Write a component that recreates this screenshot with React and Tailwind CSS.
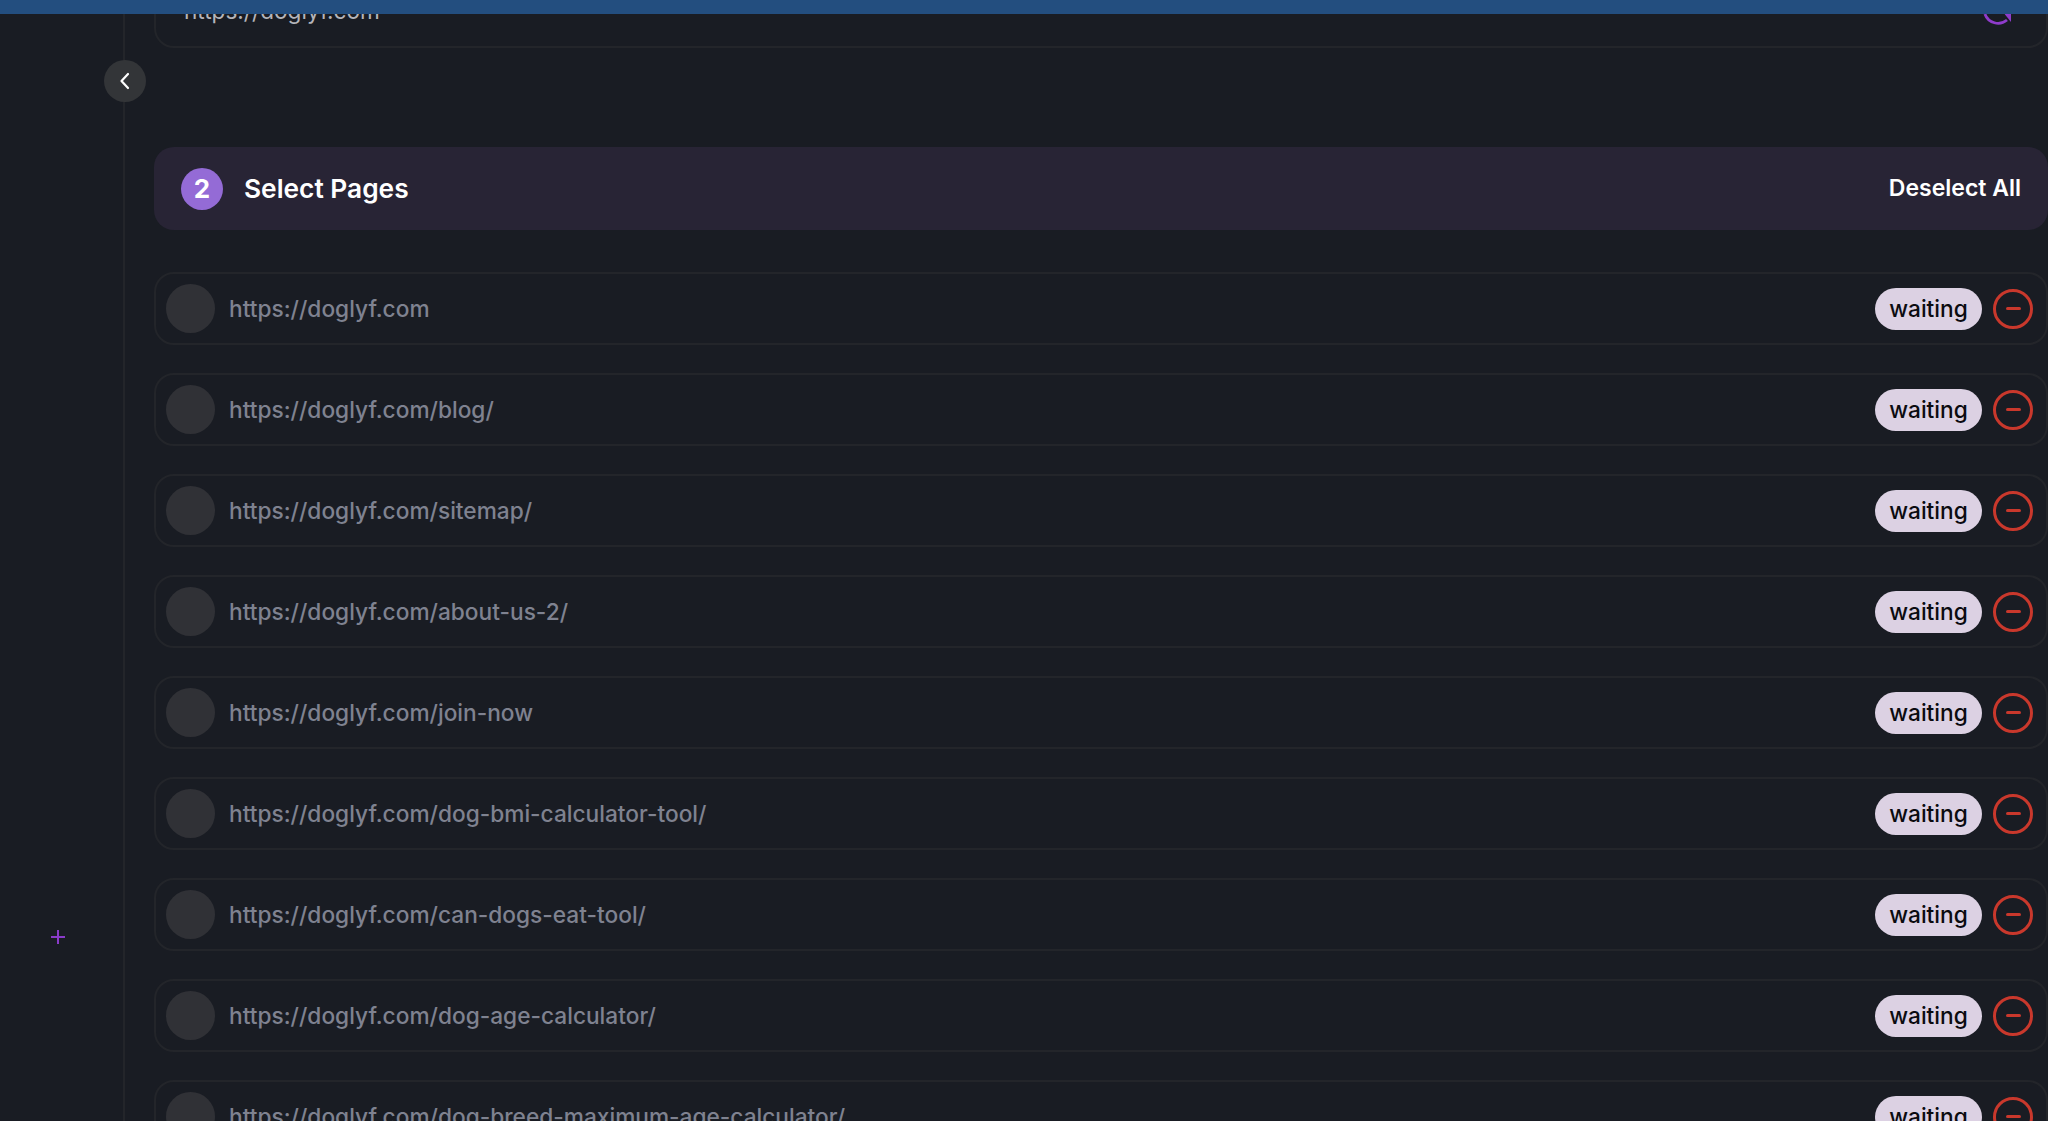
const urls = [
  "https://doglyf.com",
  "https://doglyf.com/blog/",
  "https://doglyf.com/sitemap/",
  "https://doglyf.com/about-us-2/",
  "https://doglyf.com/join-now",
  "https://doglyf.com/dog-bmi-calculator-tool/",
  "https://doglyf.com/can-dogs-eat-tool/",
  "https://doglyf.com/dog-age-calculator/",
  "https://doglyf.com/dog-breed-maximum-age-calculator/",
];

function Row({ url }) {
  return (
    <div className="h-[73px] shrink-0 flex items-center rounded-[20px] border-2 border-[#23252a] pl-[10px] pr-[13px]">
      <div className="w-[49px] h-[49px] rounded-full bg-[#303136] shrink-0" />
      <span className="ml-[14px] text-[22.7px] leading-[30px] font-[450] text-[#7f8290]">{url}</span>
      <span className="ml-auto w-[107px] h-[42px] rounded-full bg-[#dcd1e3] text-[#0b0b10] text-[22.7px] font-[450] pt-[1px] flex items-center justify-center">waiting</span>
      <span className="ml-[11px] w-[40px] h-[40px] rounded-full border-[3px] border-[#c9382c] flex items-center justify-center">
        <span className="w-[15px] h-[3.5px] rounded-full bg-[#c9382c]" />
      </span>
    </div>
  );
}

export default function App() {
  return (
    <div className="relative h-[1121px] overflow-hidden bg-[#191c23] font-['Inter',sans-serif] flex flex-col">
      <div className="relative z-10 h-[14px] shrink-0 bg-[#234e7f]" />
      <div className="flex-1 flex min-h-0">
        <aside className="w-[125px] shrink-0 border-r-2 border-[#23252a] flex justify-start pt-[915px] pl-[50px]">
          <svg width="16" height="16" viewBox="0 0 16 16" fill="none" stroke="#8a3bc9" strokeWidth="2">
            <path d="M8 1v14M1 8h14" />
          </svg>
        </aside>
        <main className="flex-1 min-w-0 pl-[29px] flex flex-col">
          <div className="relative h-[82px] -mt-[48px] shrink-0 rounded-[20px] border-2 border-[#23252a] flex items-center justify-between pl-[28px] pr-[32px]">
            <span className="text-[22.6px] leading-[30px] text-[#b4b5bb] relative top-[4px]">https://doglyf.com</span>
            <svg width="32" height="32" viewBox="0 0 32 32" fill="none" className="relative top-[5px]">
              <path d="M2.9 18A14 14 0 0 0 25 24" stroke="#8f3ccb" strokeWidth="2.8" />
              <path d="M21 16h8v10z" fill="#8f3ccb" />
            </svg>
          </div>
          <div className="mt-[99px] h-[83px] shrink-0 rounded-[20px] bg-[#282435] flex items-center justify-between pl-[27px] pr-[27px]">
            <div className="flex items-center gap-[21px]">
              <span className="w-[42px] h-[42px] rounded-full bg-[#946bd6] text-white text-[26px] font-bold flex items-center justify-center">2</span>
              <span className="text-white text-[26.3px] font-semibold">Select Pages</span>
            </div>
            <span className="text-white text-[23px] font-semibold">Deselect All</span>
          </div>
          <div className="mt-[42px] flex flex-col gap-[28px]">
            {urls.map((u) => <Row key={u} url={u} />)}
          </div>
        </main>
      </div>
      <button className="absolute left-[104px] top-[60px] w-[42px] h-[42px] rounded-full bg-[#333538] flex items-center justify-center">
        <svg width="24" height="24" viewBox="0 0 24 24" fill="none" stroke="#ffffff" strokeWidth="2.2" strokeLinecap="round" strokeLinejoin="round">
          <path d="M15 5l-6.5 7 6.5 7" />
        </svg>
      </button>
    </div>
  );
}
